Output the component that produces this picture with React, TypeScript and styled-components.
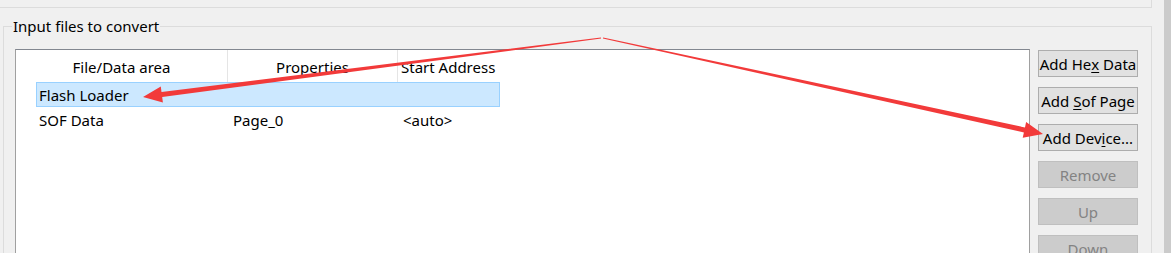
import React from "react";
import styled, { createGlobalStyle } from "styled-components";

const Global = createGlobalStyle`
  html, body { margin: 0; padding: 0; }
  body {
    background: #f0f0f0;
    font-family: "Noto Sans", "Open Sans", sans-serif;
    font-size: 15px;
    color: #000;
    overflow: hidden;
  }
`;

const Page = styled.div`
  position: relative;
  display: grid;
  grid-template-columns: 1164px 7px;
  width: 1171px;
  height: 253px;
  overflow: hidden;
`;

const Main = styled.div`
  display: flex;
  flex-direction: column;
`;

const Strip = styled.div`
  background: #cbcbcb;
`;

const PrevGroup = styled.div`
  height: 7px;
  margin-right: 12px;
  border-bottom: 1px solid #dcdcdc;
  border-right: 1px solid #dcdcdc;
`;

const Group = styled.fieldset`
  margin: 8px 12px 0 3px;
  padding: 13px 12px 0 11px;
  border: 1px solid #dcdcdc;
  min-width: 0;
  height: 260px;
  display: flex;
  gap: 9px;
`;

const Legend = styled.legend`
  padding: 0 1px;
  margin-left: -3px;
  line-height: 20px;
`;

const Body = styled.div`
  display: flex;
  gap: 8px;
  align-items: flex-start;
`;

const Table = styled.div`
  width: 1013px;
  height: 240px;
  background: #fff;
  border: 1px solid #828790;
  border-right-color: #a0a0a0;
  border-left-color: #a0a0a0;
`;

const Header = styled.div`
  display: grid;
  grid-template-columns: 212px 170px 100px;
  height: 32px;
`;

const HeadCell = styled.div<{ $align?: string }>`
  display: flex;
  align-items: center;
  justify-content: ${(p) => p.$align || "center"};
  padding: 1px 3px 0;
  border-right: 1px solid #e5e5e5;
  white-space: nowrap;
  &:last-child { border-right: none; }
`;

const Row = styled.div<{ $selected?: boolean }>`
  display: grid;
  grid-template-columns: 192px 170px 100px;
  height: 23px;
  margin-left: 20px;
  width: 462px;
  border: 1px solid ${(p) => (p.$selected ? "#99d1ff" : "transparent")};
  background: ${(p) => (p.$selected ? "#cce8ff" : "transparent")};
  box-sizing: content-box;
`;

const Cell = styled.div<{ $pad?: number }>`
  display: flex;
  align-items: center;
  padding-left: ${(p) => p.$pad ?? 4}px;
  white-space: nowrap;
`;

const Buttons = styled.div`
  display: flex;
  flex-direction: column;
  gap: 10px;
  padding-top: 1px;
`;

const Button = styled.button<{ $disabled?: boolean }>`
  width: 100px;
  height: 27px;
  padding: 0;
  font: inherit;
  font-size: 15px;
  background: ${(p) => (p.$disabled ? "#cccccc" : "#e1e1e1")};
  border: 1px solid ${(p) => (p.$disabled ? "#bfbfbf" : "#adadad")};
  color: ${(p) => (p.$disabled ? "#838383" : "#000")};
  white-space: nowrap;
  display: flex;
  align-items: center;
  justify-content: center;
`;

const U = styled.span`
  text-decoration: underline;
  text-underline-offset: 2px;
`;

const Overlay = styled.svg`
  position: absolute;
  left: 0;
  top: 0;
  pointer-events: none;
`;

function arrow(sx: number, sy: number, tx: number, ty: number, w0: number, w1: number, hl: number, hw: number) {
  const dx = tx - sx;
  const dy = ty - sy;
  const len = Math.hypot(dx, dy);
  const ux = dx / len;
  const uy = dy / len;
  const nx = -uy;
  const ny = ux;
  const bx = tx - ux * hl;
  const by = ty - uy * hl;
  const pts = [
    [sx + nx * w0 / 2, sy + ny * w0 / 2],
    [bx + nx * w1 / 2, by + ny * w1 / 2],
    [bx + nx * hw, by + ny * hw],
    [tx, ty],
    [bx - nx * hw, by - ny * hw],
    [bx - nx * w1 / 2, by - ny * w1 / 2],
    [sx - nx * w0 / 2, sy - ny * w0 / 2],
  ];
  return pts.map((p) => `${p[0].toFixed(1)},${p[1].toFixed(1)}`).join(" ");
}

export default function App() {
  return (
    <>
      <Global />
      <Page>
        <Main>
          <PrevGroup />
          <Group>
            <Legend>Input files to convert</Legend>
            <Body>
              <Table>
                <Header>
                  <HeadCell>File/Data area</HeadCell>
                  <HeadCell>Properties</HeadCell>
                  <HeadCell $align="flex-start">Start Address</HeadCell>
                </Header>
                <Row $selected>
                  <Cell $pad={2}>Flash Loader</Cell>
                  <Cell />
                  <Cell />
                </Row>
                <Row>
                  <Cell $pad={2}>SOF Data</Cell>
                  <Cell>Page_0</Cell>
                  <Cell>&lt;auto&gt;</Cell>
                </Row>
              </Table>
              <Buttons>
                <Button>Add He<U>x</U>&nbsp;Data</Button>
                <Button>Add&nbsp;<U>S</U>of Page</Button>
                <Button>Add Dev<U>i</U>ce...</Button>
                <Button $disabled>Remove</Button>
                <Button $disabled>Up</Button>
                <Button $disabled>Down</Button>
              </Buttons>
            </Body>
          </Group>
        </Main>
        <Strip />
        <Overlay width={1171} height={253} viewBox="0 0 1171 253">
          <polygon points={arrow(601, 38, 143, 97, 1, 5, 19, 8)} fill="#f23a3a" />
          <polygon points={arrow(603, 38, 1043, 134, 1, 5, 19, 8)} fill="#f23a3a" />
        </Overlay>
      </Page>
    </>
  );
}
